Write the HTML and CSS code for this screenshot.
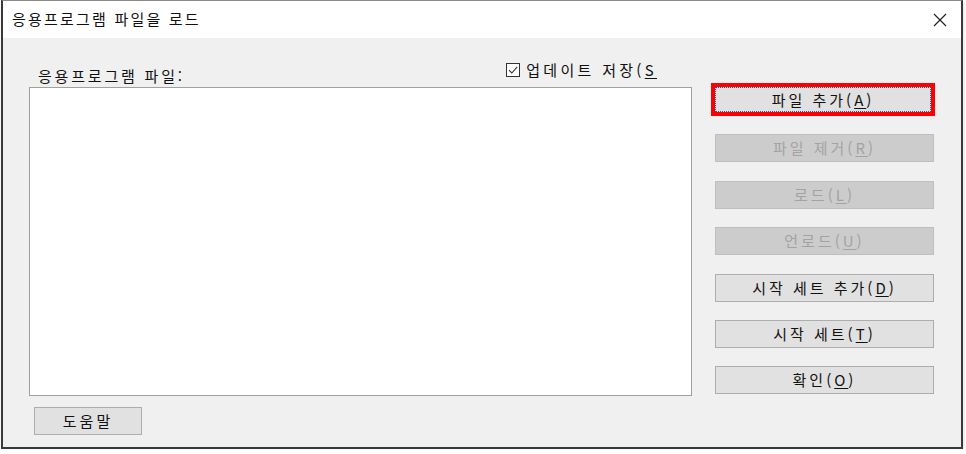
FILE: index.html
```html
<!DOCTYPE html>
<html lang="ko">
<head>
<meta charset="utf-8">
<title>응용프로그램 파일을 로드</title>
<link rel="stylesheet" href="styles.css">
</head>
<body>
<div class="window">
  <div class="titlebar">
    <span class="title">응용프로그램 파일을 로드</span>
    <span class="close">
      <svg width="14" height="14" viewBox="0 0 14 14"><path d="M1 1 L13 13 M13 1 L1 13" stroke="#222" stroke-width="1.2" fill="none"/></svg>
    </span>
  </div>
  <div class="content">
    <div class="left">
      <div class="header">
        <span class="label">응용프로그램 파일:</span>
        <label class="check">
          <span class="box"><svg width="12" height="12" viewBox="0 0 12 12"><path d="M2 6.2 L4.8 9 L10.2 2.8" stroke="#333" stroke-width="1.1" fill="none"/></svg></span>
          <span class="check-text">업데이트 저장(<u>S</u></span>
        </label>
      </div>
      <div class="listbox"></div>
      <button class="btn help">도움말</button>
    </div>
    <div class="right">
      <div class="highlight"><button class="btn focused">파일 추가(<u>A</u>)</button></div>
      <button class="btn side disabled">파일 제거(<u>R</u>)</button>
      <button class="btn side disabled">로드(<u>L</u>)</button>
      <button class="btn side disabled">언로드(<u>U</u>)</button>
      <button class="btn side">시작 세트 추가(<u>D</u>)</button>
      <button class="btn side">시작 세트(<u>T</u>)</button>
      <button class="btn side">확인(<u>O</u>)</button>
    </div>
  </div>
</div>
</body>
</html>
```

FILE: styles.css
```css
* { box-sizing: border-box; }
html, body { margin: 0; padding: 0; background: #ffffff; }
body {
  font-family: "Noto Sans CJK KR", "Noto Sans", sans-serif;
  color: #000;
}
.window {
  margin-left: 1px;
  width: 962px;
  height: 449px;
  border: 2px solid #3a3a3a;
  border-top: 1px solid #8a8a8a;
  box-shadow: 1px 2px 3px rgba(0,0,0,0.12);
  display: flex;
  flex-direction: column;
  background: #f0f0f0;
}
.titlebar {
  height: 37px;
  background: #ffffff;
  display: flex;
  align-items: center;
  justify-content: space-between;
  padding: 0 14px 0 9px;
}
.title {
  font-size: 15px;
  letter-spacing: 2.2px;
  line-height: 20px;
  margin-top: -1px;
  color: #111;
}
.close { display: flex; align-items: center; }
.content {
  flex: 1;
  display: grid;
  grid-template-columns: 663px 224px;
  column-gap: 19px;
  padding-left: 26px;
}
.left { display: flex; flex-direction: column; }
.header {
  height: 49px;
  display: flex;
  justify-content: space-between;
  align-items: flex-start;
  padding-right: 35px;
}
.label {
  font-size: 15px;
  letter-spacing: 2.8px;
  line-height: 20px;
  margin-top: 28px;
  margin-left: 9px;
  color: #111;
}
.check {
  display: flex;
  align-items: center;
  margin-top: 22px;
  gap: 6px;
}
.box {
  width: 14px;
  height: 14px;
  border: 1px solid #333;
  background: #fff;
  display: flex;
  align-items: center;
  justify-content: center;
}
.check-text {
  font-size: 15px;
  letter-spacing: 3.3px;
  line-height: 20px;
  color: #111;
}
.listbox {
  height: 309px;
  background: #ffffff;
  border: 1px solid #a0a0a0;
}
.btn {
  font-family: "Noto Sans CJK KR", "Noto Sans", sans-serif;
  font-size: 15px;
  letter-spacing: 3px;
  line-height: 20px;
  color: #111;
  background: #e1e1e1;
  border: 1px solid #adadad;
  padding: 0;
  height: 28px;
  display: flex;
  align-items: center;
  justify-content: center;
}
.help {
  width: 108px;
  margin-top: 11px;
  margin-left: 5px;
  letter-spacing: 3px;
}
.right {
  padding-top: 45px;
  display: flex;
  flex-direction: column;
  gap: 18.4px;
}
.highlight {
  width: 224px;
  height: 33px;
  border: 4px solid #ff0000;
}
.focused {
  width: 100%;
  height: 100%;
  border: 1px dotted #1f5f9f;
}
.side {
  width: 219px;
  margin-left: 4px;
}
.disabled {
  background: #cccccc;
  border-color: #bfbfbf;
  color: #a3a3a3;
}
u { text-underline-offset: 2px; }
```
